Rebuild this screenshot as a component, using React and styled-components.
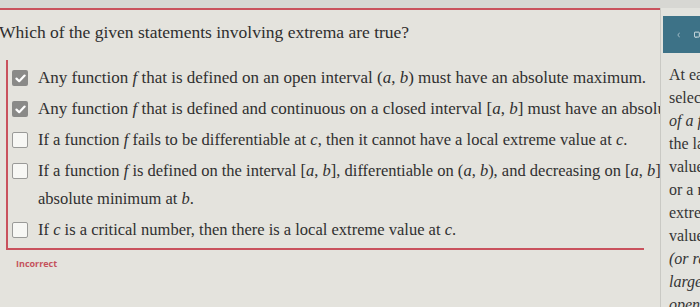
import React from 'react';
import styled, { createGlobalStyle } from 'styled-components';

const GlobalStyle = createGlobalStyle`
  html, body {
    margin: 0;
    padding: 0;
    background: #e4e3dd;
  }
  body {
    font-family: "Liberation Serif", "Times New Roman", serif;
  }
`;

const Page = styled.div`
  width: 700px;
  height: 307px;
  overflow: hidden;
  display: flex;
  flex-direction: column;
  background: #e4e3dd;
`;

const TopStrip = styled.div`
  height: 8px;
  flex: none;
  background: #d7d7d3;
`;

const Body = styled.div`
  flex: 1;
  display: flex;
  min-height: 0;
`;

const Main = styled.div`
  width: 660px;
  flex: none;
  overflow: hidden;
  border-top: 2px solid #c9525d;
  padding-top: 12px;
  box-sizing: border-box;
`;

const Title = styled.div`
  font-size: 17.5px;
  line-height: 20px;
  color: #2e2e2e;
  white-space: nowrap;
  margin-left: -1px;
`;

const AnswerBox = styled.div`
  width: 632px;
  margin: 18px 0 0 6px;
  padding: 4px 0 4px 4px;
  border-left: 2px solid #c9525d;
  border-bottom: 2px solid #c9525d;
  display: flex;
  flex-direction: column;
  gap: 3px;
`;

const Option = styled.div`
  display: flex;
  align-items: flex-start;
  gap: 10px;
  white-space: nowrap;
  font-size: ${p => (p.$small ? '16.5px' : '17px')};
  line-height: 28px;
  color: #303030;
`;

const Box = styled.span`
  flex: none;
  width: 16px;
  height: 16px;
  margin-top: 6px;
  box-sizing: border-box;
  border-radius: 2px;
  display: flex;
  align-items: center;
  justify-content: center;
  background: ${p => (p.$checked ? '#8a8a88' : '#f7f7f4')};
  border: ${p => (p.$checked ? 'none' : '1.5px solid #9a9a98')};
`;

const Lines = styled.div`
  display: flex;
  flex-direction: column;
`;

const M = styled.i`
  font-style: italic;
`;

const Feedback = styled.div`
  margin: 7px 0 0 16px;
  font-family: "Open Sans", "Liberation Sans", sans-serif;
  font-weight: 700;
  font-size: 9px;
  color: #c4525c;
`;

const Side = styled.div`
  flex: 1;
  border-left: 1px solid #c9c9c4;
  background: #e3e3de;
  overflow: hidden;
  display: flex;
  flex-direction: column;
`;

const SideHeader = styled.div`
  height: 37px;
  margin: 8px 0 0 2px;
  background: #3d7287;
  display: flex;
  align-items: center;
  gap: 14px;
  padding-left: 14px;
  flex: none;
`;

const SideText = styled.div`
  padding: 10px 0 0 8px;
  font-size: 16px;
  line-height: 23px;
  color: #353535;
  white-space: nowrap;
`;

const SideLine = styled.div`
  font-style: ${p => (p.$italic ? 'italic' : 'normal')};
`;

const Check = () => (
  <svg width="11" height="9" viewBox="0 0 11 9">
    <path d="M1.5 4.6 L4.2 7.2 L9.6 1.6" fill="none" stroke="#fff" strokeWidth="2.2" strokeLinecap="round" strokeLinejoin="round" />
  </svg>
);

const options = [
  {
    checked: true,
    lines: [
      <>Any function <M>f</M> that is defined on an open interval (<M>a</M>, <M>b</M>) must have an absolute maximum.</>,
    ],
  },
  {
    checked: true,
    lines: [
      <>Any function <M>f</M> that is defined and continuous on a closed interval [<M>a</M>, <M>b</M>] must have an absolute maximum.</>,
    ],
  },
  {
    small: true,
    lines: [
      <>If a function <M>f</M> fails to be differentiable at <M>c</M>, then it cannot have a local extreme value at <M>c</M>.</>,
    ],
  },
  {
    small: true,
    lines: [
      <>If a function <M>f</M> is defined on the interval [<M>a</M>, <M>b</M>], differentiable on (<M>a</M>, <M>b</M>), and decreasing on [<M>a</M>, <M>b</M>], then <M>f</M> has an</>,
      <>absolute minimum at <M>b</M>.</>,
    ],
  },
  {
    small: true,
    lines: [
      <>If <M>c</M> is a critical number, then there is a local extreme value at <M>c</M>.</>,
    ],
  },
];

const sideLines = [
  { t: 'At each' },
  { t: 'selected' },
  { t: 'of a function', i: true },
  { t: 'the largest' },
  { t: 'value' },
  { t: 'or a relative' },
  { t: 'extreme' },
  { t: 'value' },
  { t: '(or relative)', i: true },
  { t: 'largest', i: true },
  { t: 'open interval', i: true },
];

export default function App() {
  return (
    <>
      <GlobalStyle />
      <Page>
        <TopStrip />
        <Body>
          <Main>
            <Title>Which of the given statements involving extrema are true?</Title>
            <AnswerBox>
              {options.map((o, i) => (
                <Option key={i} $small={o.small}>
                  <Box $checked={o.checked}>{o.checked && <Check />}</Box>
                  <Lines>
                    {o.lines.map((l, j) => (
                      <span key={j}>{l}</span>
                    ))}
                  </Lines>
                </Option>
              ))}
            </AnswerBox>
            <Feedback>Incorrect</Feedback>
          </Main>
          <Side>
            <SideHeader>
              <svg width="8" height="14" viewBox="0 0 8 14">
                <path d="M6 2 L2 7 L6 12" fill="none" stroke="#e8f0f3" strokeWidth="1.4" strokeLinecap="round" strokeLinejoin="round" />
              </svg>
              <svg width="14" height="16" viewBox="0 0 14 16">
                <rect x="1" y="1" width="12" height="12" rx="1.5" fill="none" stroke="#f2f6f7" strokeWidth="2" />
                <path d="M4 13 L4 15.5 L7 13" fill="#f2f6f7" />
              </svg>
            </SideHeader>
            <SideText>
              {sideLines.map((l, i) => (
                <SideLine key={i} $italic={l.i}>{l.t}</SideLine>
              ))}
            </SideText>
          </Side>
        </Body>
      </Page>
    </>
  );
}
